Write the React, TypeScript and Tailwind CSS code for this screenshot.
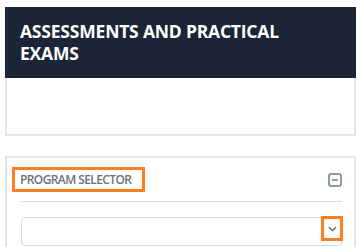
import React from "react";

export default function App() {
  return (
    <div className="w-[357px] h-[247px] overflow-hidden bg-white pt-[7px] pl-[5px] font-['Open_Sans',sans-serif]">
      <div className="w-[351px]">
        <div className="bg-[#1b2535] h-[71px] pl-[15px] pt-[13px]">
          <h1 className="text-white text-[17.5px] leading-[22px] font-bold tracking-[-0.2px] w-[300px]">
            ASSESSMENTS AND PRACTICAL EXAMS
          </h1>
        </div>
        <div className="h-[58px] border-x-2 border-b-2 border-[#e6e6e6]" />
      </div>
      <div className="mt-[20px] w-[351px] h-[120px] border-2 border-[#e6e6e6] pl-[5px] pr-[12px]">
        <div className="flex items-center justify-between mt-[9px]">
          <div className="border-[3px] border-[#fd7f23] h-[25px] w-[133px] flex items-center pl-[5px]">
            <span className="text-[12px] font-semibold text-[#6c7178] leading-none tracking-[-0.6px] whitespace-nowrap">
              PROGRAM SELECTOR
            </span>
          </div>
          <svg width="14" height="14" viewBox="0 0 14 14">
            <rect x="1" y="1" width="12" height="12" rx="2" fill="none" stroke="#6b7a8c" strokeWidth="1.5" />
            <line x1="4" y1="7" x2="10" y2="7" stroke="#6b7a8c" strokeWidth="1.5" />
          </svg>
        </div>
        <div className="ml-[8px] mt-[9px] h-px bg-[#dedede]" />
        <div className="relative ml-[9px] mt-[15px] h-[29px] border border-[#dcdcdc] rounded-[4px]">
          <div className="absolute right-[-2px] top-[-2px] w-[22px] h-[25px] border-[3px] border-[#fd7f23] bg-white flex items-center justify-center">
            <svg width="9" height="6" viewBox="0 0 9 6">
              <path d="M1 1.2 L4.5 4.5 L8 1.2" fill="none" stroke="#666" strokeWidth="1.5" />
            </svg>
          </div>
        </div>
      </div>
    </div>
  );
}
